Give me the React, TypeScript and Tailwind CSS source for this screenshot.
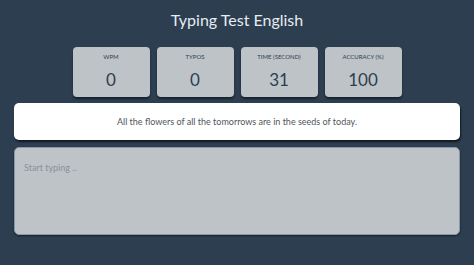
const stats = [
  { label: 'WPM', value: '0' },
  { label: 'Typos', value: '0' },
  { label: 'Time (second)', value: '31' },
  { label: 'Accuracy (%)', value: '100' },
];

export default function App() {
  return (
    <main className="min-h-screen bg-[#2c3e50] px-[14px] pt-[8px] font-['Lato','Open_Sans',sans-serif]">
      <h1 className="text-center text-[16px] leading-[24px] text-[#e6ecf0]">
        Typing Test English
      </h1>

      <div className="mt-[15px] flex justify-center gap-[7px]">
        {stats.map((stat) => (
          <div
            key={stat.label}
            className="flex h-[50px] w-[77px] flex-col items-center rounded-[4px] bg-[#bdc3c7] shadow-[0_2px_2px_rgba(0,0,0,0.45)]"
          >
            <div className="mt-[6px] text-[6px] uppercase leading-[8px] text-[#2c3e50]">
              {stat.label}
            </div>
            <div className="mt-[9px] text-[17px] leading-[20px] text-[#2c3e50]">
              {stat.value}
            </div>
          </div>
        ))}
      </div>

      <div className="mt-[6px] flex h-[37px] items-center justify-center rounded-[5px] bg-white shadow-[1px_2px_2px_rgba(0,0,0,0.6)]">
        <p className="text-[9px] text-[#4f565c]">
          All the flowers of all the tomorrows are in the seeds of today.
        </p>
      </div>

      <textarea
        placeholder="Start typing .."
        className="mt-[7px] block h-[88px] w-full resize-none rounded-[5px] border border-[#8a98a6] bg-[#bdc3c7] px-[9px] pt-[13px] text-[9px] text-[#2c3e50] outline-none placeholder:text-[#8a9299] shadow-[0_1px_2px_rgba(0,0,0,0.5)]"
      />
    </main>
  );
}
